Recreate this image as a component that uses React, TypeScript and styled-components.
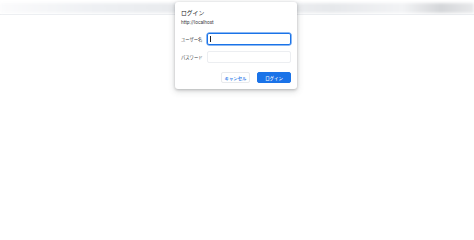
import React from 'react';
import styled, { createGlobalStyle } from 'styled-components';

const GlobalStyle = createGlobalStyle`
  html, body {
    margin: 0;
    padding: 0;
    background: #ffffff;
    font-family: 'Noto Sans CJK JP', 'Noto Sans', Roboto, sans-serif;
  }
`;

const Page = styled.div`
  position: relative;
  width: 474px;
  height: 203px;
  overflow: hidden;
  background: #ffffff;
`;

const TopArea = styled.div`
  height: 15px;
  padding-top: 3px;
  box-sizing: border-box;
  border-bottom: 1px solid #eceef1;
`;

const Toolbar = styled.div`
  height: 10px;
  filter: blur(1.5px);
  background: linear-gradient(
    90deg,
    #fbfbfc 0%,
    #eef0f3 20%,
    #e9ebee 35%,
    #f1f2f4 55%,
    #e6e8eb 70%,
    #f2f3f5 85%,
    #d4d6d9 93%,
    #e8e9eb 100%
  );
`;

const Dialog = styled.div`
  position: absolute;
  top: 2px;
  left: 175px;
  width: 122px;
  box-sizing: border-box;
  padding: 6px;
  background: #ffffff;
  border-radius: 3px;
  box-shadow: 0 1px 3px rgba(60, 64, 67, 0.3), 0 2px 6px 1px rgba(60, 64, 67, 0.15);
`;

const Title = styled.div`
  font-size: 5.8px;
  line-height: 9px;
  color: #202124;
`;

const Origin = styled.div`
  font-size: 4.8px;
  line-height: 6px;
  color: #3c4043;
  margin-top: 3px;
  font-family: Roboto, 'Noto Sans', sans-serif;
`;

const Fields = styled.div`
  display: grid;
  grid-template-columns: 26px 1fr;
  row-gap: 6px;
  align-items: center;
  margin-top: 7px;
`;

const Label = styled.div`
  font-size: 4.3px;
  color: #3c4043;
  white-space: nowrap;
`;

const Input = styled.div<{ $focused?: boolean }>`
  position: relative;
  height: 12px;
  box-sizing: border-box;
  border-radius: 2px;
  border: ${p => (p.$focused ? '1px solid #1a73e8' : '1px solid #eceef1')};
  box-shadow: ${p => (p.$focused ? '0 0 0 0.5px #1a73e8' : 'none')};
`;

const Caret = styled.span`
  position: absolute;
  left: 2px;
  top: 2px;
  width: 0.6px;
  height: 6px;
  background: #202124;
`;

const Actions = styled.div`
  display: flex;
  justify-content: flex-end;
  gap: 7px;
  margin-top: 9px;
`;

const Button = styled.div<{ $primary?: boolean }>`
  height: 11px;
  width: ${p => (p.$primary ? '34px' : '29px')};
  box-sizing: border-box;
  border-radius: 2px;
  display: flex;
  align-items: center;
  justify-content: center;
  font-size: 4.4px;
  font-weight: 500;
  color: ${p => (p.$primary ? '#ffffff' : '#1a73e8')};
  background: ${p => (p.$primary ? '#1a73e8' : '#ffffff')};
  border: ${p => (p.$primary ? '1px solid #1a73e8' : '1px solid #e8eaed')};
`;

export default function App() {
  return (
    <Page>
      <GlobalStyle />
      <TopArea>
        <Toolbar />
      </TopArea>
      <Dialog>
        <Title>ログイン</Title>
        <Origin>http://localhost</Origin>
        <Fields>
          <Label>ユーザー名</Label>
          <Input $focused>
            <Caret />
          </Input>
          <Label>パスワード</Label>
          <Input />
        </Fields>
        <Actions>
          <Button>キャンセル</Button>
          <Button $primary>ログイン</Button>
        </Actions>
      </Dialog>
    </Page>
  );
}
